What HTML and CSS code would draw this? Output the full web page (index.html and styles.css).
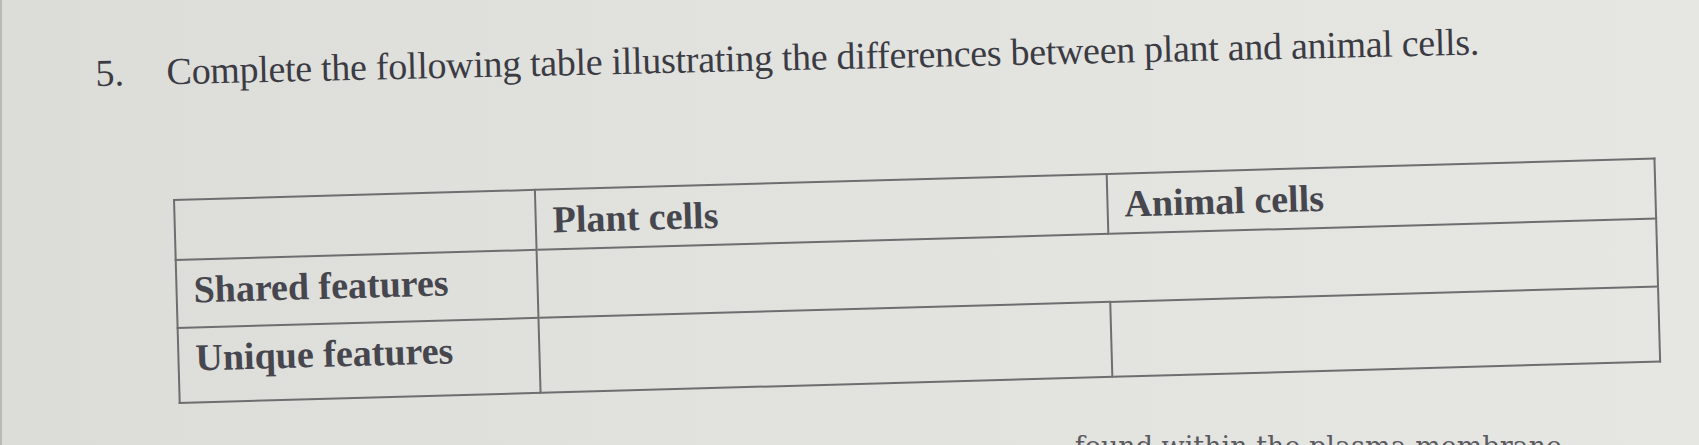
FILE: index.html
```html
<!DOCTYPE html>
<html lang="en">
<head>
<meta charset="utf-8">
<title>Plant and animal cells</title>
<link rel="stylesheet" href="styles.css">
</head>
<body>
<div class="paper">
  <div class="question">
    <span class="num">5.</span>
    <span class="qtext">Complete the following table illustrating the differences between plant and animal cells.</span>
  </div>
  <div class="table-wrap">
    <table class="cells">
      <colgroup>
        <col class="c1">
        <col class="c2">
        <col class="c3">
      </colgroup>
      <tr class="r1">
        <td></td>
        <td class="head">Plant cells</td>
        <td class="head">Animal cells</td>
      </tr>
      <tr class="r2">
        <td class="label">Shared features</td>
        <td colspan="2"></td>
      </tr>
      <tr class="r3">
        <td class="label">Unique features</td>
        <td></td>
        <td></td>
      </tr>
    </table>
  </div>
  <p class="next">found within the plasma membrane</p>
</div>
</body>
</html>
```

FILE: styles.css
```css
html, body {
  margin: 0;
  padding: 0;
  height: 100%;
}

body {
  overflow: hidden;
  background: #e2e2de;
}

.paper {
  height: 445px;
  overflow: hidden;
  box-sizing: border-box;
  border-left: 2px solid #b9b9b5;
  background: linear-gradient(90deg, #dcdcd8 0%, #e1e1dd 40%, #e6e6e2 100%);
  font-family: "Liberation Serif", "Times New Roman", serif;
  color: #3b3b44;
}

.question {
  display: flex;
  align-items: baseline;
  padding-top: 53px;
  padding-left: 93px;
  font-size: 38px;
  line-height: 44px;
  transform-origin: 0 50%;
  transform: rotate(-1.3deg);
}

.num {
  width: 71px;
  flex: none;
}

.qtext {
  white-space: nowrap;
  letter-spacing: -0.3px;
}

.table-wrap {
  margin-top: 102px;
  padding-left: 171px;
}

.cells {
  width: 1481px;
  table-layout: fixed;
  border-collapse: collapse;
  transform-origin: 0 0;
  transform: rotate(-1.6deg);
}

.c1 { width: 361px; }
.c2 { width: 572px; }
.c3 { width: 548px; }

.cells td {
  border: 2px solid #6e6e70;
  padding: 8px 16px 0;
  vertical-align: top;
  font-weight: bold;
  font-size: 38px;
  line-height: 42px;
  color: #46464e;
  white-space: nowrap;
}

.r1 td { height: 50px; }
.r2 td { height: 58px; }
.r3 td { height: 65px; }

.next {
  margin: 25px 0 0;
  padding-right: 137px;
  text-align: right;
  font-family: "DejaVu Serif", serif;
  font-size: 27px;
  line-height: 36px;
  color: #5a5a60;
  white-space: nowrap;
}
```
